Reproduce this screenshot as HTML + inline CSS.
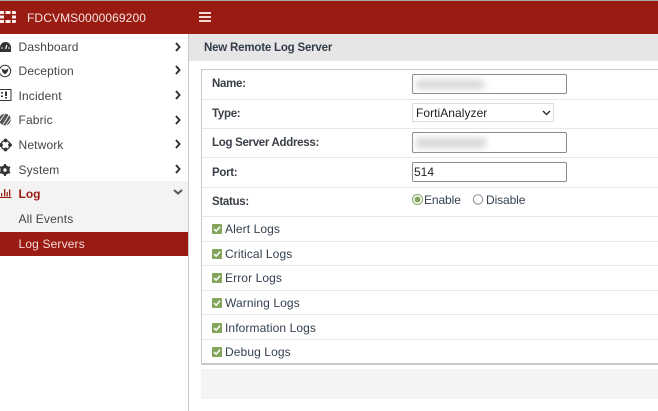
<!DOCTYPE html>
<html><head><meta charset="utf-8"><style>
*{box-sizing:border-box}
html,body{margin:0;padding:0;width:658px;height:411px;overflow:hidden;background:#fff;font-family:"Liberation Sans",sans-serif;font-size:12px;color:#333}
.a{position:absolute;white-space:nowrap}
.nav{left:18.5px;color:#444;font-size:12px;line-height:16px;letter-spacing:.15px}
.lbl{left:212px;margin-top:1px;font-weight:bold;font-size:11.5px;line-height:16px;color:#3a3f47;letter-spacing:-.3px}
.ln{position:absolute;left:202px;width:456px;height:1px;background:#e8e8e8}
.inp{position:absolute;left:412px;width:155px;background:#fff;border:1px solid #8a8a93;border-radius:2px}
.blur{position:absolute;background:#d6d6d9;filter:blur(3.5px)}
.cb{position:absolute;left:212px;width:10px;height:10px;background:#84a65c;border-radius:1px}
.cb svg{display:block}
.cl{left:225px;line-height:16px;color:#34404f;font-size:12px;letter-spacing:.1px}
.chev{position:absolute;left:174px}
</style></head><body>
<div class="a" style="left:0;top:0;width:658px;height:1px;background:#a8a8a8"></div>
<div class="a" style="left:0;top:1px;width:658px;height:33px;background:#9a1b12"></div>
<svg class="a" style="left:0;top:11px" width="17" height="13"><g fill="#fbeeee"><path d="M0 0h4v3H0zM5.500 0h5v3h-5zM12 0h2.500q1.500 0 1.500 1.500V3h-4z"/><rect x="0" y="4.500" width="4" height="3"/><rect x="12" y="4.500" width="4" height="3"/><path d="M0 9h4v3H0zM5.500 9h5v3h-5zM12 9h4v1.500q0 1.500-1.500 1.500H12z"/></g></svg>
<div class="a" style="left:27px;top:10px;line-height:16px;color:#f6e4e2;font-size:12px;letter-spacing:.1px">FDCVMS0000069200</div>
<svg class="a" style="left:199px;top:12px" width="13" height="11"><g fill="#f3d9d6"><rect width="12" height="2" y="0"/><rect width="12" height="2" y="4"/><rect width="12" height="2" y="8"/></g></svg>

<div class="a" style="left:188px;top:34px;width:1px;height:377px;background:#c8c8c8"></div>
<div class="a" style="left:0;top:181px;width:188px;height:51px;background:#f3f3f3"></div>
<div class="a" style="left:0;top:232px;width:188px;height:24px;background:#9a1b12"></div>

<svg class="a" style="left:0;top:41px" width="12" height="12"><path d="M0 11V6.500a5.500 5.500 0 0 1 11 0V11z" fill="#333"/><path d="M5.500 8L7 4" stroke="#fff" stroke-width="1.200"/><circle cx="2" cy="7" r=".8" fill="#fff"/><circle cx="9" cy="7" r=".8" fill="#fff"/></svg>
<div class="a nav" style="top:39px">Dashboard</div>
<svg class="a" style="left:0;top:64px" width="12" height="14"><circle cx="5" cy="7" r="5.700" fill="none" stroke="#333" stroke-width="1"/><path d="M1.500 4.500L5 6l3.500-1.500L7.500 8 5 10.500 2.500 8z" fill="#333"/></svg>
<div class="a nav" style="top:63px">Deception</div>
<svg class="a" style="left:0;top:89px" width="12" height="13"><rect x="-1" y=".5" width="12" height="11" fill="none" stroke="#333"/><rect x="1" y="3" width="2" height="1.500" fill="#333"/><rect x="1" y="6.500" width="2" height="1.500" fill="#333"/><rect x="5" y="2.500" width="2" height="4.500" fill="#333"/><rect x="5" y="8" width="2" height="1.500" fill="#333"/></svg>
<div class="a nav" style="top:88px">Incident</div>
<svg class="a" style="left:0;top:113px" width="12" height="13"><circle cx="5" cy="6.500" r="5.800" fill="#555"/><path d="M3 11.500L9 2M6 12L11 5M0 8L5 1" stroke="#fff" stroke-width=".8"/></svg>
<div class="a nav" style="top:112px">Fabric</div>
<svg class="a" style="left:0;top:138px" width="12" height="14"><circle cx="5.500" cy="7" r="4.500" fill="none" stroke="#333" stroke-width="1.200"/><circle cx="5.500" cy="2.500" r="1.900" fill="#333"/><circle cx="5.500" cy="11.500" r="1.900" fill="#333"/><circle cx="1" cy="7" r="1.900" fill="#333"/><circle cx="10" cy="7" r="1.900" fill="#333"/></svg>
<div class="a nav" style="top:137px">Network</div>
<svg class="a" style="left:0;top:164px" width="12" height="12"><circle cx="5" cy="6" r="3.400" fill="none" stroke="#333" stroke-width="2.600"/><path d="M5 0v12M0 3l10 6M0 9l10-6" stroke="#333" stroke-width="2"/><circle cx="5" cy="6" r="1.700" fill="#fff"/></svg>
<div class="a nav" style="top:162px">System</div>
<svg class="a" style="left:0;top:187px" width="12" height="12"><path d="M0 10.500H11.500" stroke="#9a1b12" stroke-width="1"/><path d="M1 6h1.300v3.500H1zM4 2h1.300v7.500H4zM6.500 5h1.300v4.500H6.500zM9 2.500h1.300v7H9z" fill="#9a1b12"/></svg>
<div class="a nav" style="top:186px;color:#9a1b12;font-weight:bold;letter-spacing:0">Log</div>
<div class="a nav" style="top:211px">All Events</div>
<div class="a nav" style="top:236px;color:#f3dcda">Log Servers</div>

<svg class="chev" style="top:42px" width="8" height="10"><path d="M2 1l3.500 4L2 9" fill="none" stroke="#333" stroke-width="2"/></svg>
<svg class="chev" style="top:65px" width="8" height="10"><path d="M2 1l3.500 4L2 9" fill="none" stroke="#333" stroke-width="2"/></svg>
<svg class="chev" style="top:90px" width="8" height="10"><path d="M2 1l3.500 4L2 9" fill="none" stroke="#333" stroke-width="2"/></svg>
<svg class="chev" style="top:115px" width="8" height="10"><path d="M2 1l3.500 4L2 9" fill="none" stroke="#333" stroke-width="2"/></svg>
<svg class="chev" style="top:139px" width="8" height="10"><path d="M2 1l3.500 4L2 9" fill="none" stroke="#333" stroke-width="2"/></svg>
<svg class="chev" style="top:164px" width="8" height="10"><path d="M2 1l3.500 4L2 9" fill="none" stroke="#333" stroke-width="2"/></svg>
<svg class="a" style="left:173px;top:189px" width="10" height="7"><path d="M1 1l4 3.500L9 1" fill="none" stroke="#555" stroke-width="2"/></svg>

<div class="a" style="left:189px;top:34px;width:469px;height:27px;background:#e6e6e6"></div>
<div class="a" style="left:204px;top:40px;font-weight:bold;line-height:16px;font-size:11.500px;color:#333c48;letter-spacing:-.2px">New Remote Log Server</div>

<div class="a" style="left:201px;top:69px;width:457px;height:296px;border:1px solid #c8c8c8;border-right:0;border-width:1px 0 2px 1px"></div>
<div class="ln" style="top:99px"></div>
<div class="ln" style="top:128px"></div>
<div class="ln" style="top:157px"></div>
<div class="ln" style="top:187px"></div>
<div class="ln" style="top:216px"></div>
<div class="ln" style="top:241px"></div>
<div class="ln" style="top:265px"></div>
<div class="ln" style="top:290px"></div>
<div class="ln" style="top:314px"></div>
<div class="ln" style="top:339px"></div>

<div class="a lbl" style="top:75px">Name:</div>
<div class="a lbl" style="top:105px">Type:</div>
<div class="a lbl" style="top:134px">Log Server Address:</div>
<div class="a lbl" style="top:164px">Port:</div>
<div class="a lbl" style="top:193px">Status:</div>

<div class="inp" style="top:74px;height:20px"></div>
<div class="blur" style="left:416px;top:80px;width:68px;height:9px"></div>
<div class="a" style="left:412px;top:103px;width:142px;height:19px;border:1px solid #dcdcdc;background:#fff;padding-left:3px;line-height:18px;color:#222;font-size:12px;letter-spacing:.05px">FortiAnalyzer</div>
<svg class="a" style="left:542px;top:110px" width="9" height="6"><path d="M1 1l3.500 3.500L8 1" fill="none" stroke="#222" stroke-width="1.300"/></svg>
<div class="inp" style="top:132px;height:21px"></div>
<div class="blur" style="left:416px;top:138px;width:70px;height:10px"></div>
<div class="inp" style="top:162px;height:20px;padding-left:1px;line-height:19px;color:#222">514</div>

<svg class="a" style="left:411px;top:193px" width="13" height="13"><circle cx="6.500" cy="6.500" r="5" fill="#fff" stroke="#84a65c" stroke-width="1"/><circle cx="6.500" cy="6.500" r="3" fill="#84a65c"/></svg>
<div class="a" style="left:424px;top:192px;line-height:16px;color:#34404f;letter-spacing:-.1px">Enable</div>
<svg class="a" style="left:472px;top:193px" width="13" height="13"><circle cx="6" cy="6.500" r="4.700" fill="#fff" stroke="#8a8a93" stroke-width="1"/></svg>
<div class="a" style="left:486px;top:192px;line-height:16px;color:#34404f;letter-spacing:-.1px">Disable</div>

<div class="cb" style="top:224px"><svg width="10" height="10"><path d="M2 5l2.200 2.200L8 2.800" fill="none" stroke="#fff" stroke-width="1.500"/></svg></div>
<div class="a cl" style="top:221px">Alert Logs</div>
<div class="cb" style="top:249px"><svg width="10" height="10"><path d="M2 5l2.200 2.200L8 2.800" fill="none" stroke="#fff" stroke-width="1.500"/></svg></div>
<div class="a cl" style="top:246px">Critical Logs</div>
<div class="cb" style="top:273px"><svg width="10" height="10"><path d="M2 5l2.200 2.200L8 2.800" fill="none" stroke="#fff" stroke-width="1.500"/></svg></div>
<div class="a cl" style="top:270px">Error Logs</div>
<div class="cb" style="top:298px"><svg width="10" height="10"><path d="M2 5l2.200 2.200L8 2.800" fill="none" stroke="#fff" stroke-width="1.500"/></svg></div>
<div class="a cl" style="top:295px">Warning Logs</div>
<div class="cb" style="top:323px"><svg width="10" height="10"><path d="M2 5l2.200 2.200L8 2.800" fill="none" stroke="#fff" stroke-width="1.500"/></svg></div>
<div class="a cl" style="top:320px">Information Logs</div>
<div class="cb" style="top:347px"><svg width="10" height="10"><path d="M2 5l2.200 2.200L8 2.800" fill="none" stroke="#fff" stroke-width="1.500"/></svg></div>
<div class="a cl" style="top:344px">Debug Logs</div>

<div class="a" style="left:201px;top:369px;width:457px;height:30px;background:#f4f4f4"></div>
</body></html>
